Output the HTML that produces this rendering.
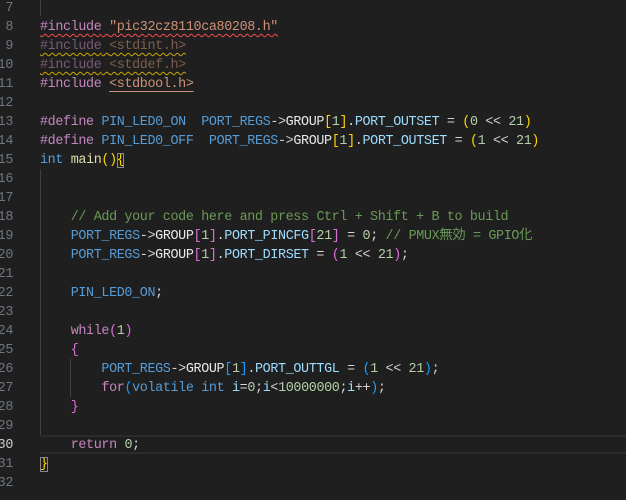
<!DOCTYPE html>
<html><head><meta charset="utf-8"><style>
body{margin:0;width:626px;height:500px;background:#1f1f1f;overflow:hidden;position:relative;font-family:"Liberation Mono","Noto Sans CJK JP",monospace;font-size:13.4px;letter-spacing:-0.36px}
.l{position:absolute;left:0;height:19px;line-height:19px;white-space:pre;width:626px;margin-top:1.5px}
.n{position:absolute;right:613px;color:#6e7681;text-align:right}
.c{position:absolute;left:40px;color:#d4d4d4}
.p{color:#c586c0}.s{color:#ce9178}.m{color:#569cd6}.v{color:#9cdcfe}.w{color:#e8e8e8}.y{color:#ffd700}.k{color:#da70d6}.b{color:#179fff}.d{color:#b5cea8}.f{color:#dcdcaa}.g{color:#6a9955}
.sq{text-decoration:underline wavy;text-decoration-thickness:1px;text-underline-offset:3px}
.dim .p{color:#7a5878}.dim .s{color:#7e5e4c}
.gd{position:absolute;width:1px;background:#404040}
.box{outline:1px solid #888;outline-offset:-1px}
</style></head><body>
<div class="gd" style="left:40px;top:0;height:16px"></div>
<div class="gd" style="left:40px;top:169px;height:266px"></div>
<div class="gd" style="left:70px;top:359px;height:38px"></div>
<div style="position:absolute;left:40px;top:435px;width:586px;height:15px;border-top:2px solid #2c2c2c;border-bottom:2px solid #2c2c2c"></div>

<div class="l" style="top:-2.5px"><span class="n">7</span></div>
<div class="l" style="top:16.5px"><span class="n">8</span><span class="c"><span class="sq" style="text-decoration-color:#f14c4c"><span class="p">#include</span> <span class="s">"pic32cz8110ca80208.h"</span></span></span></div>
<div class="l" style="top:35.5px"><span class="n">9</span><span class="c dim"><span class="sq" style="text-decoration-color:#cca700"><span class="p">#include</span> <span class="s">&lt;stdint.h&gt;</span></span></span></div>
<div class="l" style="top:54.5px"><span class="n">10</span><span class="c dim"><span class="sq" style="text-decoration-color:#cca700"><span class="p">#include</span> <span class="s">&lt;stddef.h&gt;</span></span></span></div>
<div class="l" style="top:73.5px"><span class="n">11</span><span class="c"><span class="p">#include</span> <span class="s" style="text-decoration:underline;text-underline-offset:4px">&lt;stdbool.h&gt;</span></span></div>
<div class="l" style="top:92.5px"><span class="n">12</span></div>
<div class="l" style="top:111.5px"><span class="n">13</span><span class="c"><span class="p">#define</span> <span class="m">PIN_LED0_ON</span>  <span class="m">PORT_REGS</span>-&gt;<span class="w">GROUP</span><span class="y">[</span><span class="d">1</span><span class="y">]</span>.<span class="v">PORT_OUTSET</span> = <span class="y">(</span><span class="d">0</span> &lt;&lt; <span class="d">21</span><span class="y">)</span></span></div>
<div class="l" style="top:130.5px"><span class="n">14</span><span class="c"><span class="p">#define</span> <span class="m">PIN_LED0_OFF</span>  <span class="m">PORT_REGS</span>-&gt;<span class="w">GROUP</span><span class="y">[</span><span class="d">1</span><span class="y">]</span>.<span class="v">PORT_OUTSET</span> = <span class="y">(</span><span class="d">1</span> &lt;&lt; <span class="d">21</span><span class="y">)</span></span></div>
<div class="l" style="top:149.5px"><span class="n">15</span><span class="c"><span class="m">int</span> <span class="f">main</span><span class="y">()</span><span class="y box">{</span></span></div>
<div class="l" style="top:168.5px"><span class="n">16</span></div>
<div class="l" style="top:187.5px"><span class="n">17</span></div>
<div class="l" style="top:206.5px"><span class="n">18</span><span class="c">    <span class="g">// Add your code here and press Ctrl + Shift + B to build</span></span></div>
<div class="l" style="top:225.5px"><span class="n">19</span><span class="c">    <span class="m">PORT_REGS</span>-&gt;<span class="w">GROUP</span><span class="k">[</span><span class="d">1</span><span class="k">]</span>.<span class="v">PORT_PINCFG</span><span class="k">[</span><span class="d">21</span><span class="k">]</span> = <span class="d">0</span>; <span class="g">// PMUX無効 = GPIO化</span></span></div>
<div class="l" style="top:244.5px"><span class="n">20</span><span class="c">    <span class="m">PORT_REGS</span>-&gt;<span class="w">GROUP</span><span class="k">[</span><span class="d">1</span><span class="k">]</span>.<span class="v">PORT_DIRSET</span> = <span class="k">(</span><span class="d">1</span> &lt;&lt; <span class="d">21</span><span class="k">)</span>;</span></div>
<div class="l" style="top:263.5px"><span class="n">21</span></div>
<div class="l" style="top:282.5px"><span class="n">22</span><span class="c">    <span class="m">PIN_LED0_ON</span>;</span></div>
<div class="l" style="top:301.5px"><span class="n">23</span></div>
<div class="l" style="top:320.5px"><span class="n">24</span><span class="c">    <span class="p">while</span><span class="k">(</span><span class="d">1</span><span class="k">)</span></span></div>
<div class="l" style="top:339.5px"><span class="n">25</span><span class="c">    <span class="k">{</span></span></div>
<div class="l" style="top:358.5px"><span class="n">26</span><span class="c">        <span class="m">PORT_REGS</span>-&gt;<span class="w">GROUP</span><span class="b">[</span><span class="d">1</span><span class="b">]</span>.<span class="v">PORT_OUTTGL</span> = <span class="b">(</span><span class="d">1</span> &lt;&lt; <span class="d">21</span><span class="b">)</span>;</span></div>
<div class="l" style="top:377.5px"><span class="n">27</span><span class="c">        <span class="p">for</span><span class="b">(</span><span class="m">volatile</span> <span class="m">int</span> <span class="v">i</span>=<span class="d">0</span>;<span class="v">i</span>&lt;<span class="d">10000000</span>;<span class="v">i</span>++<span class="b">)</span>;</span></div>
<div class="l" style="top:396.5px"><span class="n">28</span><span class="c">    <span class="k">}</span></span></div>
<div class="l" style="top:415.5px"><span class="n">29</span></div>
<div class="l" style="top:434.5px"><span class="n" style="color:#cccccc">30</span><span class="c">    <span class="p">return</span> <span class="d">0</span>;</span></div>
<div class="l" style="top:453.5px"><span class="n">31</span><span class="c"><span class="y box">}</span></span></div>
<div class="l" style="top:472.5px"><span class="n">32</span></div>
</body></html>
